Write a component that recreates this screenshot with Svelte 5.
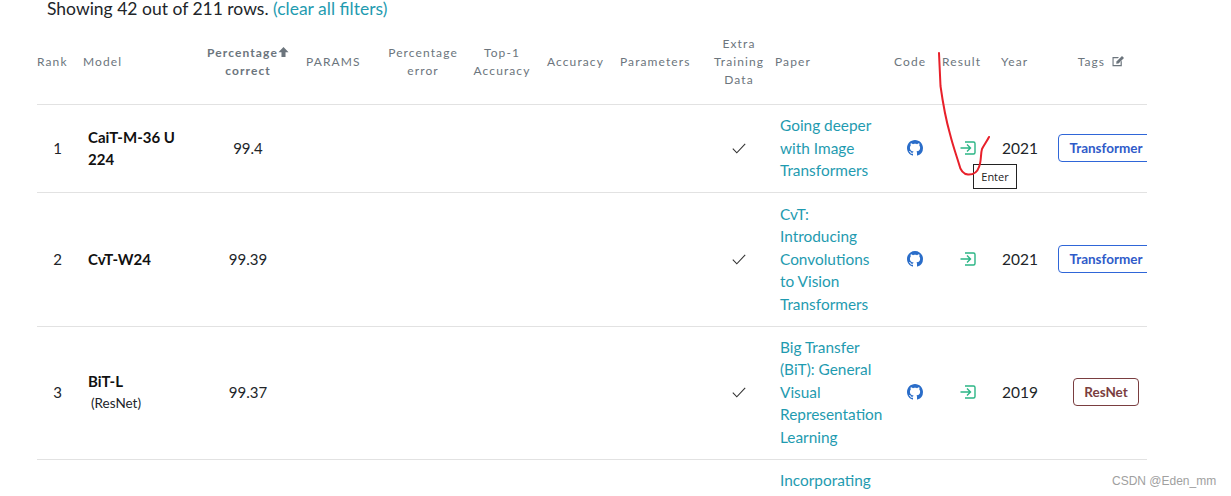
<script>
  const rows = [
    { rank: 1, model: 'CaiT-M-36 U 224', correct: '99.4', paper: 'Going deeper with Image Transformers', year: 2021, tag: 'Transformer', filled: true },
    { rank: 2, model: 'CvT-W24', correct: '99.39', paper: 'CvT: Introducing Convolutions to Vision Transformers', year: 2021, tag: 'Transformer', filled: true },
    { rank: 3, model: 'BiT-L', sub: '(ResNet)', correct: '99.37', paper: 'Big Transfer (BiT): General Visual Representation Learning', year: 2019, tag: 'ResNet', filled: true },
    { rank: '', model: '', correct: '', paper: 'Incorporating', year: '', tag: '', filled: false }
  ]
</script>

<div class="page">
  <p class="summary">Showing 42 out of 211 rows. <a href="#top">(clear all filters)</a></p>

  <div class="table-wrap">
    <table>
      <colgroup>
        <col style="width: 41px" />
        <col style="width: 122px" />
        <col style="width: 96px" />
        <col style="width: 80px" />
        <col style="width: 94px" />
        <col style="width: 64px" />
        <col style="width: 80px" />
        <col style="width: 94px" />
        <col style="width: 62px" />
        <col style="width: 114px" />
        <col style="width: 52px" />
        <col style="width: 56px" />
        <col style="width: 58px" />
        <col style="width: 112px" />
      </colgroup>
      <thead>
        <tr>
          <th class="left">Rank</th>
          <th class="left model-head">Model</th>
          <th class="sorted">
            Percentage<svg class="sort-arrow" viewBox="0 0 12 12" width="11" height="12"><path d="M6 0.5 11.5 6.2H8.2V11.5H3.8V6.2H0.5Z" /></svg><br />correct
          </th>
          <th class="left params-head">PARAMS</th>
          <th>Percentage<br />error</th>
          <th>Top-1<br />Accuracy</th>
          <th class="left acc-head">Accuracy</th>
          <th class="left param-head">Parameters</th>
          <th>Extra<br />Training<br />Data</th>
          <th class="left paper-head">Paper</th>
          <th class="left code-head">Code</th>
          <th class="left result-head">Result</th>
          <th class="left year-head">Year</th>
          <th class="tags-head">
            Tags
            <svg class="edit" viewBox="0 0 14 12" width="14" height="12">
              <path d="M1.5 2H8L6.8 3.2H2.6V10H9.6V7L10.8 5.8V11.2H1.5Z" />
              <path d="M5.5 6.4 11 1 13 3 7.5 8.4 5.2 8.8Z" />
            </svg>
          </th>
        </tr>
      </thead>
      <tbody>
        {#each rows as row, i (i)}
          <tr>
            <td class="center">{row.rank}</td>
            <td class="model">
              <div class="model-name">{row.model}</div>
              {#if row.sub}<div class="model-sub">{row.sub}</div>{/if}
            </td>
            <td class="center">{row.correct}</td>
            <td></td>
            <td></td>
            <td></td>
            <td></td>
            <td></td>
            <td class="center">
              {#if row.filled}
                <svg class="check" viewBox="0 0 14 11" width="14" height="11"><path d="M0.8 5.6 4.8 9.8 13.2 0.8" /></svg>
              {/if}
            </td>
            <td class="paper"><a href="#top">{row.paper}</a></td>
            <td class="icon-cell code-cell">
              {#if row.filled}
                <svg class="github" viewBox="0 0 16 16" width="16" height="16">
                  <path d="M8 0C3.58 0 0 3.58 0 8c0 3.54 2.29 6.53 5.47 7.59.4.07.55-.17.55-.38 0-.19-.01-.82-.01-1.49-2.01.37-2.53-.49-2.69-.94-.09-.23-.48-.94-.82-1.13-.28-.15-.68-.52-.01-.53.63-.01 1.08.58 1.23.82.72 1.21 1.87.87 2.33.66.07-.52.28-.87.51-1.07-1.78-.2-3.64-.89-3.64-3.95 0-.87.31-1.59.82-2.15-.08-.2-.36-1.02.08-2.12 0 0 .67-.21 2.2.82.64-.18 1.32-.27 2-.27.68 0 1.36.09 2 .27 1.53-1.04 2.2-.82 2.2-.82.44 1.1.16 1.92.08 2.12.51.56.82 1.27.82 2.15 0 3.07-1.87 3.75-3.65 3.95.29.25.54.73.54 1.48 0 1.07-.01 1.93-.01 2.2 0 .21.15.46.55.38A8.013 8.013 0 0016 8c0-4.42-3.58-8-8-8z" />
                </svg>
              {/if}
            </td>
            <td class="icon-cell result-cell">
              {#if row.filled}
                <svg class="enter" viewBox="0 0 16 14" width="16" height="14">
                  <path d="M5 1H13.5A1.5 1.5 0 0 1 15 2.5V11.5A1.5 1.5 0 0 1 13.5 13H5M0.5 7H10.5M7 3.5 10.5 7 7 10.5" />
                </svg>
              {/if}
            </td>
            <td class="year">{row.year}</td>
            <td class="tags">
              {#if row.tag}
                <span class="badge" class:resnet={row.tag === 'ResNet'}>{row.tag}</span>
              {/if}
            </td>
          </tr>
        {/each}
      </tbody>
    </table>
  </div>

  <!-- hand drawn annotation on top of the screenshot -->
  <svg class="scribble" viewBox="0 0 80 130" width="80" height="130">
    <path d="M4 1C4.5 12 5 24 5.5 34C8 52 11 68 15 82C18 94 21 102 24 112C25.5 119 28 122 33 122.5C38 122.8 42 121 44 115C46.5 109 45.5 102 47 97C49 93 52 89 54 85" />
  </svg>
  <div class="tooltip">Enter</div>
  <div class="watermark">CSDN @Eden_mm</div>
</div>

<style>
  :global(body) {
    margin: 0;
    background: #fff;
  }

  .page {
    position: relative;
    height: 496px;
    overflow: hidden;
    font-family: Lato, "Liberation Sans", sans-serif;
    color: #212529;
    font-size: 15px;
  }

  .summary {
    margin: 0;
    padding-left: 47px;
    height: 26px;
    font-size: 17.5px;
    line-height: 17px;
  }

  a {
    color: #1f9bb0;
    text-decoration: none;
  }

  .table-wrap {
    margin-left: 37px;
    width: 1110px;
    overflow: hidden;
  }

  table {
    width: 1125px;
    table-layout: fixed;
    border-collapse: collapse;
  }

  th {
    height: 72px;
    padding: 0 0 6px;
    font-size: 12px;
    font-weight: 400;
    line-height: 18px;
    letter-spacing: 1.1px;
    color: #6c757d;
    text-align: center;
    vertical-align: middle;
    white-space: nowrap;
    border-bottom: 1px solid #e2e2e2;
  }

  th.left {
    text-align: left;
  }

  th.sorted {
    font-weight: 700;
  }

  .model-head {
    padding-left: 5px;
  }

  .params-head {
    padding-left: 10px;
  }

  .acc-head {
    padding-left: 13px;
  }

  .param-head {
    padding-left: 6px;
  }

  .paper-head {
    padding-left: 5px;
  }

  .code-head {
    padding-left: 10px;
  }

  .result-head {
    padding-left: 6px;
  }

  .year-head {
    padding-left: 9px;
  }

  .tags-head {
    padding-right: 9px;
  }

  .sort-arrow {
    fill: #6c757d;
    vertical-align: -1px;
  }

  .edit {
    fill: #6c757d;
    margin-left: 2px;
    vertical-align: -1px;
  }

  td {
    padding: 9.3px 0 10.5px;
    line-height: 22.5px;
    vertical-align: middle;
    border-bottom: 1px solid #e2e2e2;
  }

  .center {
    text-align: center;
  }

  .model {
    padding-left: 10px;
  }

  .model-name {
    font-weight: 700;
    color: #111;
  }

  .model-sub {
    margin-left: 3px;
    font-size: 13.5px;
  }

  .paper {
    padding-left: 10px;
    font-size: 15.4px;
  }

  .icon-cell {
    text-align: center;
    line-height: 0;
  }

  .code-cell {
    padding-left: 10px;
  }

  .result-cell {
    padding-left: 7px;
  }

  .check {
    fill: none;
    stroke: #333;
    stroke-width: 1.1;
  }

  .github {
    fill: #2a6dc9;
  }

  .enter {
    fill: none;
    stroke: #2bb585;
    stroke-width: 1.4;
  }

  .year {
    padding-left: 10px;
    font-size: 15.5px;
  }

  .tags {
    text-align: center;
  }

  .badge {
    display: inline-block;
    padding: 0 10px;
    height: 26px;
    line-height: 26px;
    font-size: 13.5px;
    font-weight: 700;
    color: #2f5bc9;
    border: 1px solid #2f66d8;
    border-radius: 4px;
    vertical-align: middle;
  }

  .badge.resnet {
    color: #7a3e40;
    border-color: #7a3e40;
  }

  .scribble {
    position: absolute;
    left: 935px;
    top: 52px;
    fill: none;
    stroke: #e8202a;
    stroke-width: 2;
    stroke-linecap: round;
    z-index: 2;
  }

  .tooltip {
    position: absolute;
    left: 973px;
    top: 164px;
    width: 42px;
    height: 23px;
    border: 1px solid #222;
    background: #fff;
    font-family: "Open Sans", sans-serif;
    font-size: 11px;
    line-height: 23px;
    text-align: center;
    color: #222;
    z-index: 1;
  }

  .watermark {
    position: absolute;
    left: 1112px;
    top: 474px;
    font-family: "Liberation Sans", sans-serif;
    font-size: 12px;
    line-height: 14px;
    color: #a0a0a0;
  }
</style>
